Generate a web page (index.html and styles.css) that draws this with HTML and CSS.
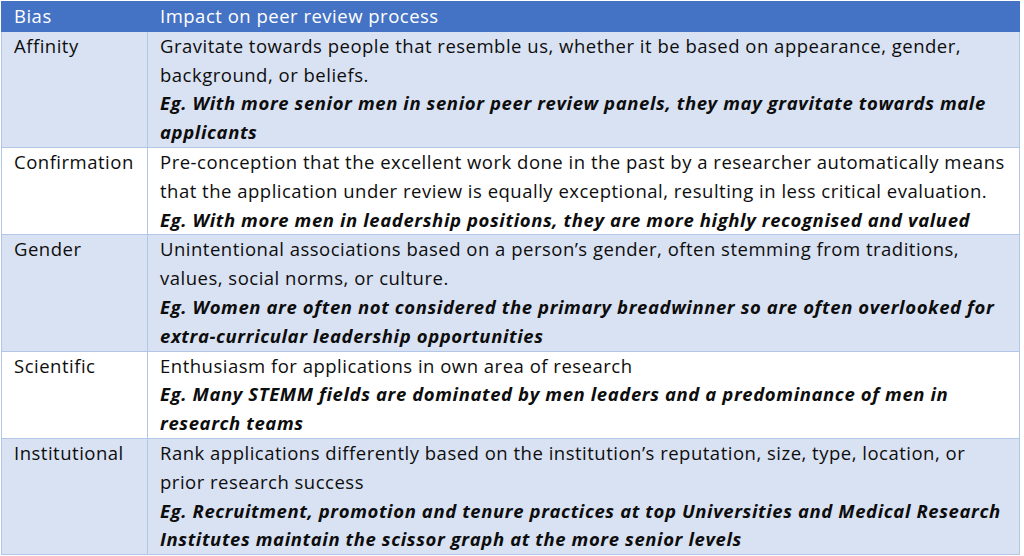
FILE: index.html
```html
<!DOCTYPE html>
<html lang="en">
<head>
<meta charset="utf-8">
<title>Bias in peer review</title>
<link rel="stylesheet" href="styles.css">
</head>
<body>
<table class="bias-table">
  <thead>
    <tr>
      <th class="col-bias">Bias</th>
      <th class="col-impact">Impact on peer review process</th>
    </tr>
  </thead>
  <tbody>
    <tr class="band">
      <td class="col-bias">Affinity</td>
      <td class="col-impact">
        <p class="desc">Gravitate towards people that resemble us, whether it be based on appearance, gender,<br>background, or beliefs.</p>
        <p class="eg">Eg. With more senior men in senior peer review panels, they may gravitate towards male<br>applicants</p>
      </td>
    </tr>
    <tr>
      <td class="col-bias">Confirmation</td>
      <td class="col-impact">
        <p class="desc">Pre-conception that the excellent work done in the past by a researcher automatically means<br>that the application under review is equally exceptional, resulting in less critical evaluation.</p>
        <p class="eg">Eg. With more men in leadership positions, they are more highly recognised and valued</p>
      </td>
    </tr>
    <tr class="band">
      <td class="col-bias">Gender</td>
      <td class="col-impact">
        <p class="desc">Unintentional associations based on a person’s gender, often stemming from traditions,<br>values, social norms, or culture.</p>
        <p class="eg">Eg. Women are often not considered the primary breadwinner so are often overlooked for<br>extra-curricular leadership opportunities</p>
      </td>
    </tr>
    <tr>
      <td class="col-bias">Scientific</td>
      <td class="col-impact">
        <p class="desc">Enthusiasm for applications in own area of research</p>
        <p class="eg">Eg. Many STEMM fields are dominated by men leaders and a predominance of men in<br>research teams</p>
      </td>
    </tr>
    <tr class="band">
      <td class="col-bias">Institutional</td>
      <td class="col-impact">
        <p class="desc">Rank applications differently based on the institution’s reputation, size, type, location, or<br>prior research success</p>
        <p class="eg">Eg. Recruitment, promotion and tenure practices at top Universities and Medical Research<br>Institutes maintain the scissor graph at the more senior levels</p>
      </td>
    </tr>
  </tbody>
</table>
</body>
</html>
```

FILE: styles.css
```css
html, body {
  margin: 0;
  padding: 0;
  background: #ffffff;
}

body {
  font-family: "Open Sans", Lato, "Liberation Sans", sans-serif;
  font-size: 18.5px;
  letter-spacing: 0.5px;
  color: #0d0d0d;
}

.bias-table {
  margin: 1px 0 0 1px;
  width: 1019px;
  border-collapse: collapse;
  table-layout: fixed;
}

.bias-table th,
.bias-table td {
  text-align: left;
  vertical-align: top;
  line-height: 28.8px;
  border: 1px solid #b4c6e7;
}

.bias-table th {
  background: #4472c4;
  color: #ffffff;
  font-weight: normal;
  border-color: #4472c4;
  padding: 0 12px;
  height: 29px;
  box-sizing: border-box;
}

.bias-table td {
  padding: 0 12px;
}

.col-bias {
  width: 146px;
  box-sizing: border-box;
}

.band td {
  background: #d9e2f3;
}

.desc,
.eg {
  margin: 0;
}

.eg {
  font-weight: bold;
  font-style: italic;
  letter-spacing: 0.6px;
}
```
